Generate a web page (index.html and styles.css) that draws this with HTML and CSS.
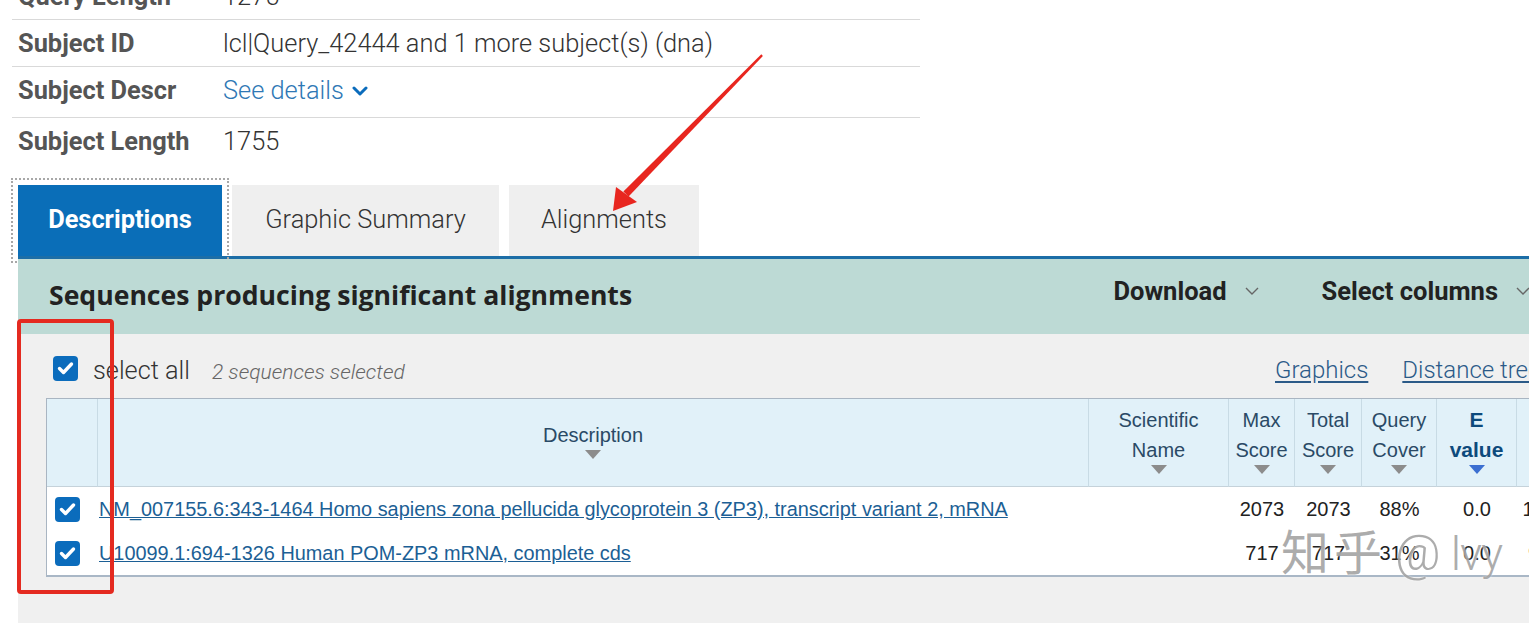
FILE: index.html
```html
<!DOCTYPE html>
<html lang="en">
<head>
<meta charset="utf-8">
<title>BLAST results</title>
<link rel="stylesheet" href="styles.css">
</head>
<body>
<div class="page">
  <div class="info">
    <div class="info-row"><div class="label">Query Length</div><div class="value">1275</div></div>
    <div class="info-row"><div class="label">Subject ID</div><div class="value">lcl|Query_42444 and 1 more subject(s) (dna)</div></div>
    <div class="info-row tall"><div class="label">Subject Descr</div><div class="value"><span class="see">See details</span><svg class="see-chev" width="16" height="10" viewBox="0 0 16 10"><polyline points="2,2 8,8 14,2" fill="none" stroke="#0b6cbc" stroke-width="3" stroke-linecap="round" stroke-linejoin="round"/></svg></div></div>
    <div class="info-row last"><div class="label">Subject Length</div><div class="value">1755</div></div>
  </div>

  <div class="results">
    <div class="tabbar">
      <div class="tab tab-desc active">Descriptions</div>
      <div class="tab tab-graphic">Graphic Summary</div>
      <div class="tab tab-align">Alignments</div>
    </div>
    <div class="bar-title">
      <h2>Sequences producing significant alignments</h2>
      <div class="actions">
        <span class="action">Download <svg width="16" height="10" viewBox="0 0 16 10"><polyline points="2,2 8,8 14,2" fill="none" stroke="#666" stroke-width="1.4"/></svg></span>
        <span class="action">Select columns <svg width="16" height="10" viewBox="0 0 16 10"><polyline points="2,2 8,8 14,2" fill="none" stroke="#666" stroke-width="1.4"/></svg></span>
      </div>
    </div>
    <div class="panel">
      <div class="select-row">
        <svg class="cb" width="25" height="25" viewBox="0 0 25 25"><rect x="0" y="0" width="25" height="25" rx="4" fill="#0b6cbc"/><polyline points="6.5,12.5 10.5,16.5 18.5,8" fill="none" stroke="#fff" stroke-width="3.4" stroke-linecap="round" stroke-linejoin="round"/></svg>
        <span class="select-all">select all</span>
        <span class="count">2 sequences selected</span>
        <div class="links"><span class="link">Graphics</span><span class="link">Distance tree of results</span></div>
      </div>
      <div class="grid">
        <div class="th">&nbsp;</div>
        <div class="th"><span>Description</span><i class="sort"></i></div>
        <div class="th"><span>Scientific<br>Name</span><i class="sort"></i></div>
        <div class="th"><span>Max<br>Score</span><i class="sort"></i></div>
        <div class="th"><span>Total<br>Score</span><i class="sort"></i></div>
        <div class="th"><span>Query<br>Cover</span><i class="sort"></i></div>
        <div class="th evalue"><span>E<br>value</span><i class="sort blue"></i></div>
        <div class="th"><span>Per.<br>Ident</span><i class="sort"></i></div>

        <div class="td check"><svg class="cb" width="25" height="25" viewBox="0 0 25 25"><rect x="0" y="0" width="25" height="25" rx="4" fill="#0b6cbc"/><polyline points="6.5,12.5 10.5,16.5 18.5,8" fill="none" stroke="#fff" stroke-width="3.4" stroke-linecap="round" stroke-linejoin="round"/></svg></div>
        <div class="td desc"><span class="rlink">NM_007155.6:343-1464 Homo sapiens zona pellucida glycoprotein 3 (ZP3), transcript variant 2, mRNA</span></div>
        <div class="td"></div>
        <div class="td">2073</div>
        <div class="td">2073</div>
        <div class="td">88%</div>
        <div class="td">0.0</div>
        <div class="td">100.00%</div>

        <div class="td check"><svg class="cb" width="25" height="25" viewBox="0 0 25 25"><rect x="0" y="0" width="25" height="25" rx="4" fill="#0b6cbc"/><polyline points="6.5,12.5 10.5,16.5 18.5,8" fill="none" stroke="#fff" stroke-width="3.4" stroke-linecap="round" stroke-linejoin="round"/></svg></div>
        <div class="td desc"><span class="rlink">U10099.1:694-1326 Human POM-ZP3 mRNA, complete cds</span></div>
        <div class="td"></div>
        <div class="td">717</div>
        <div class="td">717</div>
        <div class="td">31%</div>
        <div class="td">0.0</div>
        <div class="td">99.68%</div>
      </div>
    </div>
  </div>

  <div class="redbox"></div>
  <svg class="arrow" width="1529" height="623" viewBox="0 0 1529 623">
    <polygon points="761.3,54.3 762.9,55.9 628.6,196.6 623.4,191.4" fill="#e8261f"/>
    <polygon points="613,211 616,187 637,202" fill="#e8261f"/>
  </svg>
  <div class="watermark"><span class="wm-cjk">知乎</span><span class="wm-at">@</span><span class="wm-name">lvy</span></div>
</div>
</body>
</html>
```

FILE: styles.css
```css
html, body {
  margin: 0;
  padding: 0;
  overflow: hidden;
  background: #fff;
}
body {
  width: 1529px;
  height: 623px;
  font-family: Roboto, "Liberation Sans", sans-serif;
}
.page {
  position: relative;
  width: 1529px;
  height: 623px;
  overflow: hidden;
}

/* info rows */
.info {
  width: 908px;
  margin: -27px 0 0 12px;
}
.info-row {
  display: flex;
  border-bottom: 1px solid #d9d9d9;
  padding: 9px 0;
  line-height: 28px;
  font-size: 25.4px;
}
.info-row.tall { padding-bottom: 13px; }
.info-row.last { border-bottom: none; }
.label {
  width: 211px;
  padding-left: 6px;
  box-sizing: border-box;
  font-weight: 700;
  color: #555;
  flex: none;
}
.value {
  color: #333;
  font-weight: 300;
  display: flex;
  align-items: center;
}
.see { color: #2f78b5; }
.see-chev { margin-left: 8px; margin-top: 1px; }

/* results */
.results {
  width: 1590px;
  margin: 21px 0 0 18px;
}
.tabbar {
  display: flex;
  gap: 10px;
  align-items: flex-end;
  border-bottom: 3px solid #1c6ea7;
}
.tab {
  height: 71px;
  padding-bottom: 3px;
  box-sizing: border-box;
  display: flex;
  align-items: center;
  justify-content: center;
  background: #efefef;
  font-size: 25.4px;
  color: #333;
  font-weight: 300;
}
.tab-desc { width: 204px; }
.tab-graphic { width: 267px; }
.tab-align { width: 190px; }
.tab.active {
  background: #0a6eb8;
  color: #fff;
  font-weight: 700;
  outline: 2px dotted #a8a8a8;
  outline-offset: 5px;
}
.bar-title {
  position: relative;
  z-index: 1;
  display: flex;
  align-items: center;
  height: 75px;
  box-sizing: border-box;
  padding: 0 77px 3px 31px;
  background: #bddad5;
}
.bar-title h2 {
  margin: 0;
  font-family: "Open Sans", "Liberation Sans", sans-serif;
  font-weight: 700;
  font-size: 26.6px;
  color: #222;
}
.actions {
  margin-left: auto;
  display: flex;
  gap: 62px;
  padding-bottom: 8px;
}
.action {
  display: flex;
  align-items: center;
  gap: 17px;
  font-weight: 700;
  font-size: 25.5px;
  color: #222;
}

.panel {
  background: #f0f0f0;
  padding: 16px 0 60px 28px;
}
.select-row {
  display: flex;
  align-items: center;
  height: 36px;
  margin-left: 7px;
  padding-right: 70px;
}
.cb { flex: none; display: block; }
.select-all {
  margin-left: 15px;
  font-size: 25.3px;
  font-weight: 300;
  color: #333;
  margin-top: 4px;
}
.count {
  margin-left: 22px;
  font-size: 21px;
  font-style: italic;
  font-weight: 300;
  color: #666;
  margin-top: 7px;
}
.links {
  margin-left: auto;
  display: flex;
  gap: 34px;
  white-space: nowrap;
  width: 263px;
  margin-top: 3px;
}
.link {
  font-size: 24px;
  font-weight: 300;
  color: #2b5a88;
  text-decoration: underline;
  text-underline-offset: 3px;
}

/* table */
.grid {
  display: grid;
  grid-template-columns: 51px 991px 140px 66px 67px 75px 80px 90px;
  width: max-content;
  margin-top: 12px;
  border: 1px solid #a9b5c2;
  border-bottom: 2px solid #a9b7c6;
  background: #fff;
  font-family: "Liberation Sans", Arial, sans-serif;
}
.th {
  height: 88px;
  box-sizing: border-box;
  padding-bottom: 6px;
  background: #e1f1f9;
  border-right: 1px solid #c8dbe5;
  border-bottom: 1px solid #c5d2da;
  display: flex;
  flex-direction: column;
  align-items: center;
  justify-content: center;
  text-align: center;
  font-size: 20px;
  line-height: 30px;
  color: #2a4a66;
}
.th.evalue {
  font-weight: 700;
  font-size: 21px;
  color: #0d4a7c;
}
.sort {
  width: 0;
  height: 0;
  border-left: 8px solid transparent;
  border-right: 8px solid transparent;
  border-top: 9px solid #8c8c8c;
}
.sort.blue { border-top-color: #3b6fd1; }
.td {
  height: 44px;
  display: flex;
  align-items: center;
  justify-content: center;
  font-size: 20px;
  color: #222;
  white-space: nowrap;
}
.td.check {
  justify-content: flex-start;
  padding-left: 8px;
}
.td.desc {
  justify-content: flex-start;
  padding-left: 1px;
}
.rlink {
  color: #1c5f95;
  text-decoration: underline;
  font-size: 19.9px;
}

/* annotations */
.redbox {
  position: absolute;
  left: 17px;
  top: 319px;
  width: 97px;
  height: 275px;
  box-sizing: border-box;
  border: 4px solid #e42a20;
  border-radius: 4px;
  z-index: 5;
}
.arrow {
  position: absolute;
  left: 0;
  top: 0;
  z-index: 5;
}
.watermark {
  position: absolute;
  left: 1281px;
  top: 518px;
  z-index: 6;
  display: flex;
  align-items: baseline;
  font-family: Roboto, "Noto Sans CJK SC", sans-serif;
  font-weight: 300;
  font-size: 48px;
  line-height: 62px;
  white-space: nowrap;
  color: rgba(140, 140, 140, 0.72);
  text-shadow: 0 0 2px rgba(255, 255, 255, 0.9);
}
.wm-cjk {
  font-family: "Noto Sans CJK SC", sans-serif;
  font-weight: 400;
  letter-spacing: 5px;
}
.wm-at {
  font-size: 50px;
  margin-left: 8px;
  margin-right: 10px;
}
.wm-name {
  font-size: 46px;
  letter-spacing: -1px;
}
```
